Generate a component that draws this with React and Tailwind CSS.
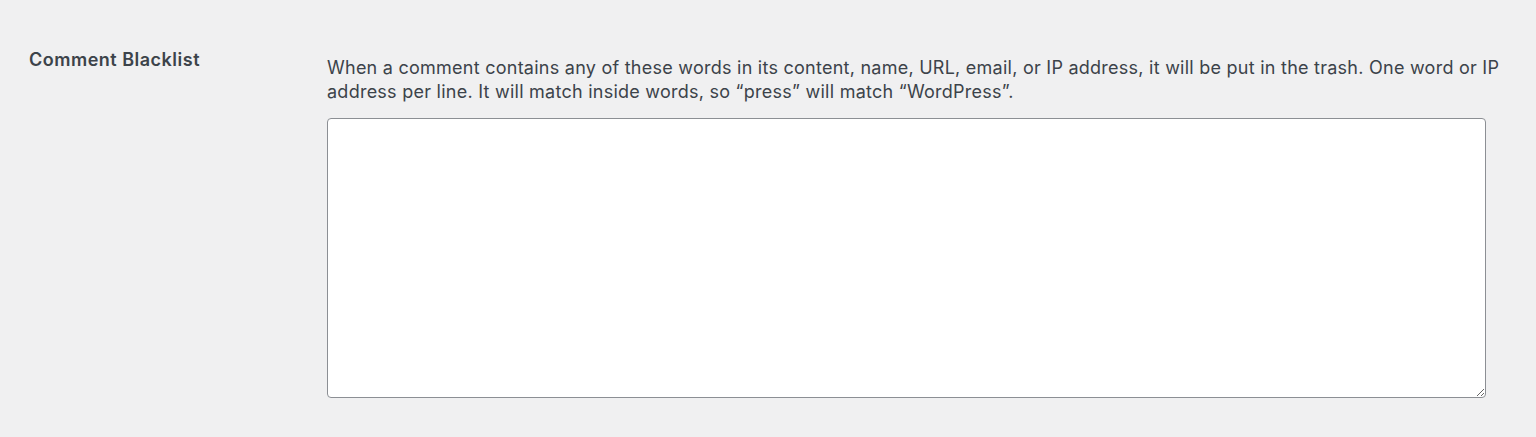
import React from 'react';

function App() {
  return (
    <div className="min-h-screen w-full bg-[#f0f0f1] text-[#3c434a] font-['Inter','Liberation_Sans',sans-serif]">
      <div className="flex pt-[48px]">
        <div className="w-[327px] shrink-0 pl-[29px]">
          <label htmlFor="blacklist" className="block text-[18px] font-semibold leading-[24px] tracking-[0.5px] text-[#3c434a]">
            Comment Blacklist
          </label>
        </div>
        <div className="w-[1186px] shrink-0 pt-[8px]">
          <p className="text-[18px] leading-[24px] tracking-[0.25px]">
            When a comment contains any of these words in its content, name, URL, email, or IP address, it will be put in the trash. One word or IP address per line. It will match inside words, so “press” will match “WordPress”.
          </p>
          <textarea
            id="blacklist"
            className="mt-[14px] block h-[280px] w-[1159px] rounded-[4px] border border-[#8c8f94] bg-white p-2 text-[16px] outline-none"
          />
        </div>
      </div>
    </div>
  );
}

export default App;
